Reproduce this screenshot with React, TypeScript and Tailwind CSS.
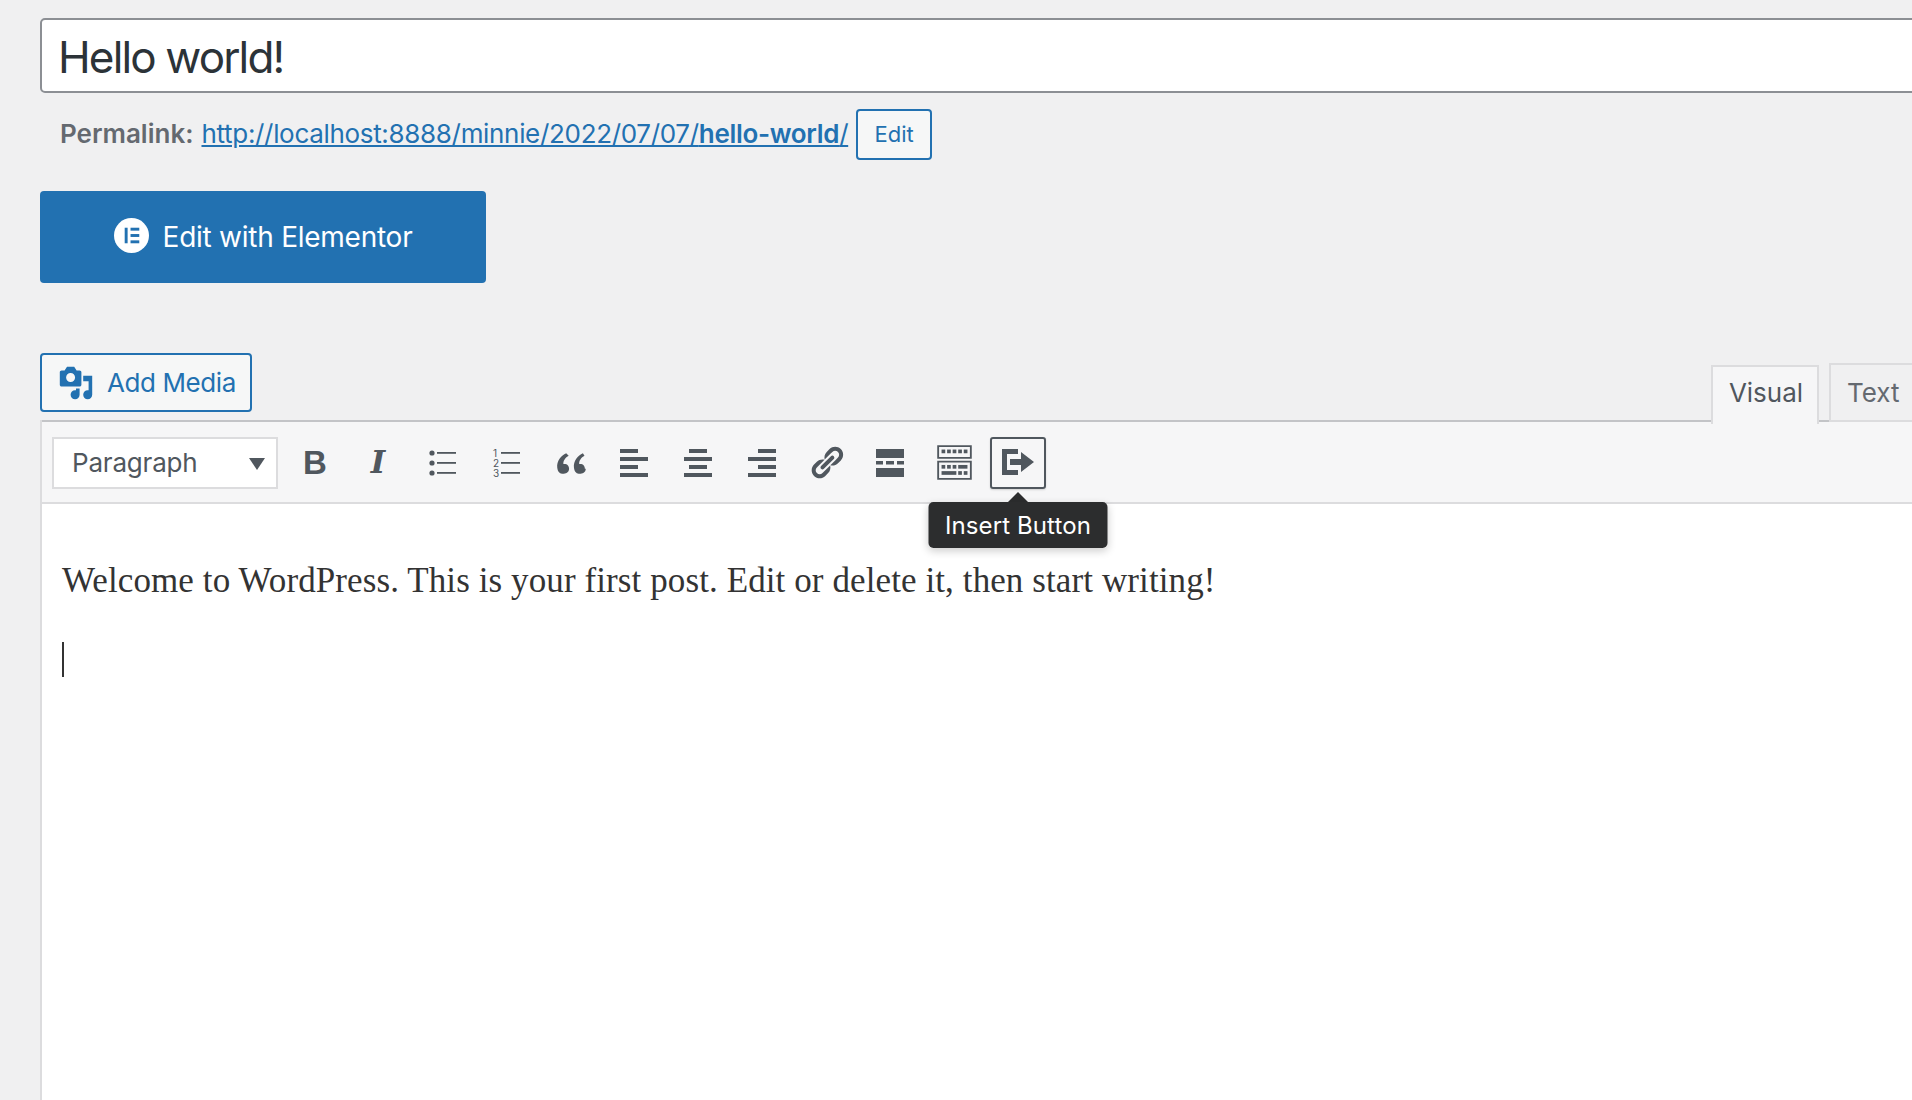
const sans = "font-['Inter','Liberation_Sans',sans-serif]";

function Dash({ d }: { d: string }) {
  return (
    <svg viewBox="0 0 20 20" className="w-[36px] h-[36px]" fill="#50575e">
      <path d={d} />
    </svg>
  );
}

function Bars({ rows }: { rows: number[][] }) {
  return (
    <svg viewBox="0 0 28 28" className="w-[28px] h-[28px]" fill="#50575e">
      {rows.map((r, i) => (
        <rect key={i} x={r[0]} y={i * 8} width={r[1]} height={4} />
      ))}
    </svg>
  );
}

function UlIcon() {
  return (
    <svg viewBox="0 0 28 28" className="w-[28px] h-[28px] ml-[2px]" fill="#50575e">
      <circle cx="3" cy="4" r="2.6" />
      <circle cx="3" cy="14" r="2.6" />
      <circle cx="3" cy="24" r="2.6" />
      <rect x="8" y="3" width="19" height="1.8" />
      <rect x="8" y="13" width="19" height="1.8" />
      <rect x="8" y="23" width="19" height="1.8" />
    </svg>
  );
}

function OlIcon() {
  return (
    <svg viewBox="0 0 28 28" className="w-[28px] h-[28px] ml-[2px] overflow-visible" fill="#50575e">
      <text x="0" y="7.500" fontSize="10" fontFamily="Inter">1</text>
      <text x="0" y="17.500" fontSize="10" fontFamily="Inter">2</text>
      <text x="0" y="27.500" fontSize="10" fontFamily="Inter">3</text>
      <rect x="8" y="3" width="19" height="1.8" />
      <rect x="8" y="13" width="19" height="1.8" />
      <rect x="8" y="23" width="19" height="1.8" />
    </svg>
  );
}

function MoreIcon() {
  return (
    <svg viewBox="0 0 28 28" className="w-[28px] h-[28px]" fill="#50575e">
      <rect x="0" y="0" width="28" height="9" />
      <rect x="0" y="12" width="7" height="3.5" />
      <rect x="10" y="12" width="8" height="3.5" />
      <rect x="21" y="12" width="7" height="3.5" />
      <rect x="0" y="19" width="28" height="9" />
    </svg>
  );
}

function SinkIcon() {
  return (
    <svg viewBox="0 0 30 30" className="w-[37px] h-[37px]" fill="#50575e" fillRule="evenodd">
      <path d="M1 1h28v11H1zM2.500 2.500v8h25v-8zM1 13.500h28v15.500H1zM2.500 15v12.500h25V15z" />
      <rect x="4.500" y="4.500" width="3" height="3" />
      <rect x="9" y="4.500" width="3" height="3" />
      <rect x="13.500" y="4.500" width="3" height="3" />
      <rect x="18" y="4.500" width="3" height="3" />
      <rect x="22.500" y="4.500" width="3" height="3" />
      <rect x="4.500" y="17" width="3" height="3" />
      <rect x="9" y="17" width="3" height="3" />
      <rect x="13.500" y="17" width="3" height="3" />
      <rect x="18" y="17" width="7.500" height="3" />
      <rect x="4.500" y="22" width="12" height="3" />
      <rect x="18" y="22" width="3" height="3" />
      <rect x="22.500" y="22" width="3" height="3" />
    </svg>
  );
}

function ButtonIcon() {
  return (
    <svg viewBox="0 0 32 28" className="w-[32px] h-[28px]" fill="#50575e">
      <path d="M0 0h16v5H5v16h11v5H0z" />
      <path d="M8 10h11V3l13 10-13 10v-7H8z" />
    </svg>
  );
}

function ElementorLogo() {
  return (
    <svg viewBox="0 0 36 36" className="w-[35px] h-[35px] mt-[-4px]">
      <circle cx="18" cy="18" r="18" fill="#fff" />
      <rect x="11" y="10" width="3" height="16" fill="#2271b1" />
      <rect x="17" y="10" width="9" height="3" fill="#2271b1" />
      <rect x="17" y="16.500" width="9" height="3" fill="#2271b1" />
      <rect x="17" y="23" width="9" height="3" fill="#2271b1" />
    </svg>
  );
}

function ToolButton({ children }: { children: React.ReactNode }) {
  return <div className="w-[56px] h-[52px] flex items-center justify-center">{children}</div>;
}

export default function App() {
  return (
    <div className={`w-[1912px] h-[1100px] overflow-hidden bg-[#f0f0f1] pl-[40px] pt-[18px] ${sans}`}>
      <div className="h-[75px] mr-[-20px] border-2 border-[#8c8f94] rounded-[5px] bg-white pl-[16px] pt-[2px] flex items-center text-[44px] tracking-[-1.85px] text-[#2c3338]">
        Hello world!
      </div>

      <div className="mt-[16px] h-[51px] pl-[20px] flex items-center text-[26px] text-[#646970]">
        <strong className="font-semibold mt-[-2px]">Permalink:</strong>
        <a className="ml-[8px] mt-[-2px] text-[#2271b1] underline tracking-[-0.32px]" href="#">
          http://localhost:8888/minnie/2022/07/07/<strong className="font-semibold">hello-world</strong>/
        </a>
        <span className="ml-[8px] w-[76px] h-[51px] border-2 border-[#2271b1] rounded-[4px] bg-[#f6f7f7] text-[#2271b1] text-[22px] flex items-center justify-center">
          Edit
        </span>
      </div>

      <div className="mt-[31px] w-[446px] h-[92px] rounded-[4px] bg-[#2271b1] text-white text-[28px] tracking-[-0.25px] flex items-center justify-center gap-[14px]">
        <ElementorLogo />
        <span>Edit with Elementor</span>
      </div>

      <div className="mt-[70px] mr-[-20px] flex items-end justify-between">
        <div className="mb-[10px] w-[212px] h-[59px] border-2 border-[#2271b1] rounded-[4px] bg-[#f6f7f7] text-[#2271b1] text-[26px] tracking-[-0.4px] flex items-center pl-[16px] gap-[13px]">
          <svg viewBox="0 0 20 20" className="w-[36px] h-[36px]" fill="#2271b1">
            <path d="M13 11V4c0-.55-.45-1-1-1h-1.670L9 1H5L3.670 3H2c-.55 0-1 .45-1 1v7c0 .55.45 1 1 1h10c.55 0 1-.45 1-1zM7 4.500c1.380 0 2.500 1.120 2.500 2.500S8.380 9.500 7 9.500 4.500 8.380 4.500 7 5.620 4.500 7 4.500zM14 6h5v10.500c0 1.380-1.120 2.500-2.500 2.500S14 17.880 14 16.500s1.120-2.500 2.500-2.500c.17 0 .34.02.5.05V9h-3V6zm-4 8.050V13h2v3.500c0 1.380-1.120 2.500-2.500 2.500S7 17.880 7 16.500 8.120 14 9.500 14c.17 0 .34.02.5.05z" />
          </svg>
          Add Media
        </div>
        <div className="flex items-end gap-[10px] mb-[-2px] relative z-10 text-[26px]">
          <div className="w-[108px] h-[59px] pb-[6px] pl-[2px] border-2 border-b-0 border-[#dcdcde] bg-[#f6f6f7] text-[#50575e] flex items-center justify-center">
            Visual
          </div>
          <div className="w-[103px] h-[59px] mb-[2px] border-2 border-[#dcdcde] bg-[#f0f0f1] text-[#646970] flex items-center pl-[16px]">
            Text
          </div>
        </div>
      </div>

      <div className="mr-[-20px] mt-[-2px] border-l-2 border-[#dcdcde]">
        <div className="h-[84px] pt-[1px] border-t-2 border-b-2 border-t-[#c3c4c7] border-b-[#dcdcde] bg-[#f6f6f7] flex items-center pl-[10px] gap-[8px]">
          <div className="w-[226px] h-[52px] border-2 border-[#dcdcde] bg-white text-[#50575e] text-[26px] tracking-[-0.2px] flex items-center justify-between pl-[18px] pr-[11px]">
            Paragraph
            <span className="w-0 h-0 mt-[2px] border-l-[8px] border-r-[8px] border-t-[12px] border-l-transparent border-r-transparent border-t-[#50575e]" />
          </div>
          <ToolButton>
            <span className="font-['Liberation_Sans'] font-bold text-[33px] leading-none text-[#50575e] ml-[2px]">B</span>
          </ToolButton>
          <ToolButton>
            <span className="font-['DejaVu_Serif'] font-bold italic text-[31px] leading-none text-[#50575e]">I</span>
          </ToolButton>
          <ToolButton><UlIcon /></ToolButton>
          <ToolButton><OlIcon /></ToolButton>
          <ToolButton>
            <Dash d="M9.490 13.220c0-.74-.2-1.380-.61-1.900-.62-.78-1.830-.88-2.530-.72-.29-1.650 1.110-3.750 2.920-4.650L7.880 4.580c-2.730 1.300-5.420 4.280-4.960 8.050C3.210 15.250 4.700 16 6.100 16c1.410 0 3.390-.66 3.390-2.780zm8.780 0c0-.74-.2-1.380-.61-1.900-.63-.78-1.840-.88-2.530-.72-.29-1.650 1.100-3.750 2.920-4.650l-.89-1.370c-2.730 1.300-5.420 4.280-4.960 8.050.29 2.620 1.780 3.370 3.180 3.370 1.410 0 3.390-.66 3.390-2.780z" />
          </ToolButton>
          <ToolButton><Bars rows={[[0, 18], [0, 28], [0, 18], [0, 28]]} /></ToolButton>
          <ToolButton><Bars rows={[[5, 18], [0, 28], [5, 18], [0, 28]]} /></ToolButton>
          <ToolButton><Bars rows={[[10, 18], [0, 28], [10, 18], [0, 28]]} /></ToolButton>
          <ToolButton>
            <svg viewBox="0 0 20 20" className="w-[37px] h-[37px]" fill="#50575e">
              <path d="M17.740 2.760c1.680 1.690 1.680 4.410 0 6.100l-1.530 1.520c-1.120 1.120-2.700 1.470-4.140 1.090l2.620-2.610.76-.77.76-.76c.84-.84.84-2.200 0-3.040-.84-.85-2.200-.85-3.040 0l-.77.76-3.380 3.380c-.37-1.440-.02-3.020 1.100-4.140l1.520-1.530c1.690-1.680 4.420-1.680 6.100 0zM8.590 13.430l5.340-5.340c.42-.42.42-1.100 0-1.520-.44-.43-1.130-.39-1.530 0l-5.330 5.340c-.42.42-.42 1.100 0 1.520.44.43 1.130.39 1.520 0zm-.76 2.290l4.140-4.150c.38 1.440.03 3.020-1.090 4.140l-1.520 1.530c-1.690 1.680-4.410 1.680-6.100 0-1.680-1.680-1.680-4.420 0-6.100l1.530-1.520c1.120-1.120 2.700-1.470 4.140-1.100l-4.140 4.150c-.85.84-.85 2.200 0 3.050.84.84 2.200.84 3.040 0z" />
            </svg>
          </ToolButton>
          <ToolButton><MoreIcon /></ToolButton>
          <ToolButton><SinkIcon /></ToolButton>
          <div className="relative w-[56px] h-[52px] flex items-center justify-center border-2 border-[#50575e] rounded-[3px] shadow-[0_1px_2px_rgba(0,0,0,0.15)]">
            <ButtonIcon />
            <div className="absolute top-[53px] left-1/2 -translate-x-1/2 w-0 h-0 border-l-[11px] border-r-[11px] border-b-[11px] border-l-transparent border-r-transparent border-b-[#2c2d2e] z-20" />
            <div className="absolute top-[63px] left-1/2 -translate-x-1/2 w-[179px] h-[46px] pt-[3px] rounded-[5px] bg-[#2c2d2e] text-white text-[24px] tracking-[0.1px] whitespace-nowrap flex items-center justify-center shadow-[0_3px_8px_rgba(0,0,0,0.2)] z-20">
              Insert Button
            </div>
          </div>
        </div>

        <div className="h-[600px] bg-white pl-[20px] pt-[54px] font-['Liberation_Serif',serif] text-[35px] tracking-[0.1px] leading-[46px] text-[#333333]">
          <p>Welcome to WordPress. This is your first post. Edit or delete it, then start writing!</p>
          <div className="mt-[38px] w-[2px] h-[35px] bg-[#333333]" />
        </div>
      </div>
    </div>
  );
}
